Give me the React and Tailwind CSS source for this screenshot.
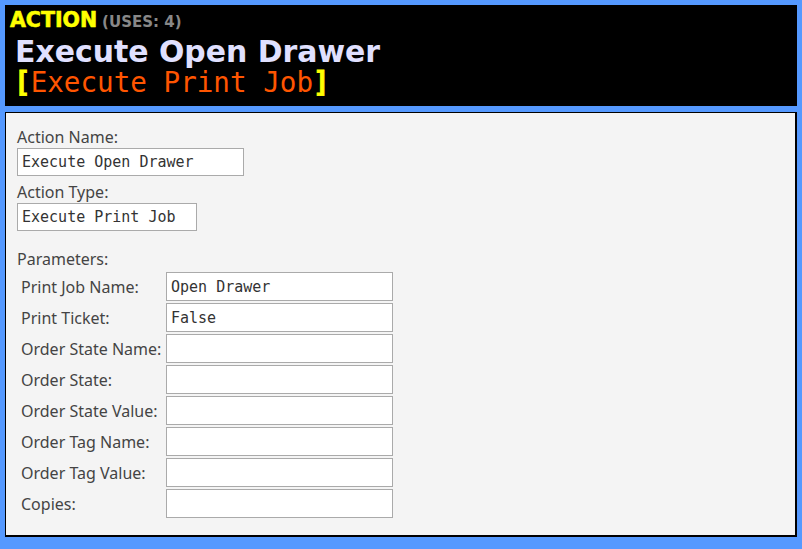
import React from 'react';

const params = [
  { label: 'Print Job Name:', value: 'Open Drawer' },
  { label: 'Print Ticket:', value: 'False' },
  { label: 'Order State Name:', value: '' },
  { label: 'Order State:', value: '' },
  { label: 'Order State Value:', value: '' },
  { label: 'Order Tag Name:', value: '' },
  { label: 'Order Tag Value:', value: '' },
  { label: 'Copies:', value: '' },
];

const labelFont = { fontFamily: '"Noto Sans", "Open Sans", sans-serif' };
const monoFont = { fontFamily: '"DejaVu Sans Mono", "Liberation Mono", monospace' };

const TextBox = ({ value, className }) => (
  <input
    readOnly
    value={value}
    style={monoFont}
    className={`block bg-white border border-[#aaaaaa] px-[4px] text-[15px] text-[#333333] outline-none ${className}`}
  />
);

const Header = () => (
  <div className="bg-black pl-[5px] pt-[3px] pb-[10px]" style={{ fontFamily: '"DejaVu Sans", Verdana, sans-serif' }}>
    <div className="flex items-baseline gap-[5px] leading-[24px]">
      <span className="text-[20.5px] font-bold text-[#ffff00] [-webkit-text-stroke:0.6px_#ffff00]">ACTION</span>
      <span className="text-[15px] font-bold text-[#888888]">(USES: 4)</span>
    </div>
    <div className="ml-[5px] text-[29.9px] font-bold leading-[36px] text-[#e0e0ff]">Execute Open Drawer</div>
    <div className="ml-[4px] text-[27.6px] leading-[26px]" style={monoFont}>
      <span className="font-bold text-[#ffff00] [-webkit-text-stroke:0.8px_#ffff00]">[</span>
      <span className="text-[#ff5500]">Execute Print Job</span>
      <span className="font-bold text-[#ffff00] [-webkit-text-stroke:0.8px_#ffff00]">]</span>
    </div>
  </div>
);

export default function App() {
  return (
    <div className="min-h-screen bg-[#5599ff] p-[5px]">
      <Header />
      <div
        className="mt-[6px] border border-r-2 border-b-2 border-black bg-[#f4f4f4] pl-[11px] pt-[13px] pb-[15px] text-[16px] text-[#444444]"
        style={labelFont}
      >
        <div className="leading-[22px]">Action Name:</div>
        <TextBox value="Execute Open Drawer" className="w-[227px] h-[28px]" />
        <div className="mt-[5px] leading-[22px]">Action Type:</div>
        <TextBox value="Execute Print Job" className="w-[180px] h-[28px]" />
        <div className="mt-[17px] leading-[22px]">Parameters:</div>
        <div className="grid grid-cols-[145px_227px] gap-[2px] p-[2px]">
          {params.map((p) => (
            <React.Fragment key={p.label}>
              <div className="flex items-center pl-[2px] leading-[22px] whitespace-nowrap">{p.label}</div>
              <TextBox value={p.value} className="w-[227px] h-[29px]" />
            </React.Fragment>
          ))}
        </div>
      </div>
    </div>
  );
}
